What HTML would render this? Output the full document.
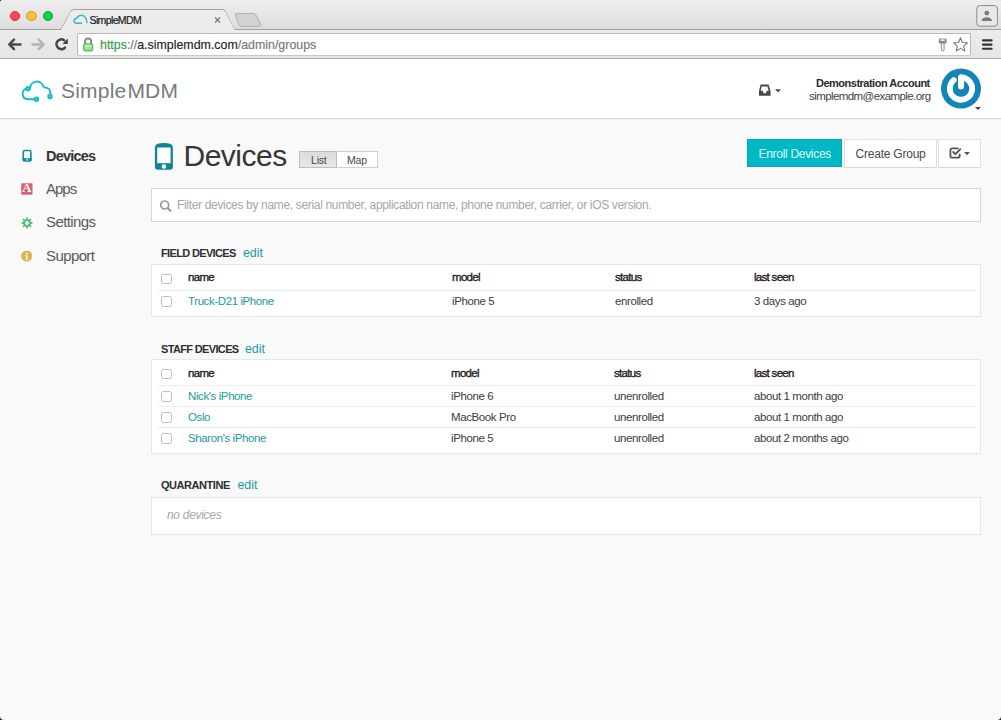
<!DOCTYPE html>
<html><head><meta charset="utf-8">
<style>
*{margin:0;padding:0;box-sizing:border-box}
html,body{width:1001px;height:720px;overflow:hidden;background:#1e1e1e}
body{font-family:"Liberation Sans",sans-serif;position:relative}
.a{position:absolute;white-space:nowrap}
#win{position:absolute;left:0;top:0;width:1001px;height:720px;background:#f9f9f9;border-radius:3px 1px 4px 4px;overflow:hidden}
#tabstrip{position:absolute;left:0;top:0;width:1001px;height:30px;background:linear-gradient(#eeeeee,#dddddd)}
#toolbar{position:absolute;left:0;top:30px;width:1001px;height:29px;background:linear-gradient(#ececec,#e6e6e6);border-bottom:1px solid #a8a8a8}
#omni{position:absolute;left:77px;top:33px;width:894px;height:23px;background:#fff;border:1px solid #b8b8b8;border-bottom-color:#c8c8c8;border-radius:2px}
#header{position:absolute;left:0;top:59px;width:1001px;height:60px;background:#fff;border-bottom:1px solid #d9d9d9;box-shadow:0 1px 0 #f0f0f0}
.teal,.td.teal{color:#1f9a9e}
.th{position:absolute;white-space:nowrap;font-weight:normal;font-size:11.5px;color:#222;letter-spacing:-0.7px;line-height:12px;-webkit-text-stroke:0.35px #222}
.td{position:absolute;white-space:nowrap;font-size:11.5px;color:#3c3c3c;letter-spacing:-0.4px;line-height:12px}
.cb{position:absolute;width:10.5px;height:10.5px;border:1px solid #bdbdbd;border-radius:2.5px;background:#fff}
.tbl{position:absolute;left:151px;width:830px;background:#fff;border:1px solid #e7e7e7}
.hr{position:absolute;left:6px;width:818px;height:1px;background:#ececec}
.sec{position:absolute;white-space:nowrap;font-weight:bold;font-size:11px;color:#2e2e2e;letter-spacing:-0.65px;line-height:12px}
.edit{font-size:12.5px;line-height:14px;letter-spacing:-0.1px}
.nav{position:absolute;white-space:nowrap;font-size:15px;color:#5a5a5a;line-height:16px}
</style></head><body>
<div id="win">
  <!-- tab strip -->
  <div id="tabstrip">
    <div class="a" style="left:9.8px;top:10.5px;width:10.4px;height:10.4px;border-radius:50%;background:#fd4659;border:0.7px solid #c52a3c"></div>
    <div class="a" style="left:26.3px;top:10.5px;width:10.4px;height:10.4px;border-radius:50%;background:#fdbd3e;border:0.7px solid #d39a2a"></div>
    <div class="a" style="left:43.1px;top:10.5px;width:10.4px;height:10.4px;border-radius:50%;background:#0bd54e;border:0.7px solid #0a9a3a"></div>
    <svg class="a" style="left:0;top:0" width="1001" height="31">
      <path d="M0 29.5 H61 L71 11.5 Q72 9.5 74 9.5 H222 Q224 9.5 225 11.5 L234 29.5 H1001" fill="none" stroke="#a2a2a2" stroke-width="1.1"/>
      <path d="M61 30 L71 11.5 Q72 10 74 10 H222 Q224 10 225 11.5 L234.5 30 Z" fill="#ececec"/>
      <path d="M235 14 Q236 13.5 238 13.5 H253 Q255 13.5 256 15 L261 24.5 Q261.5 26.5 259 26.5 H242 Q240 26.5 239 25 Z" fill="#d3d3d3" stroke="#b3b3b3" stroke-width="1"/>
      <path d="M215 17.5 L220 22.5 M220 17.5 L215 22.5" stroke="#777" stroke-width="1.2"/>
      <rect x="949.5" y="1.5" width="0" height="0"/>
      <rect x="976.8" y="5.6" width="20.6" height="20.6" rx="3" fill="#e8e8e8" stroke="#8c8c8c" stroke-width="1"/>
      <circle cx="986.8" cy="13.1" r="2.4" fill="#7a7a7a"/>
      <path d="M981.6 21 Q982 17.3 986.8 17.3 Q991.6 17.3 992 21 Z" fill="#7a7a7a"/>
    </svg>
    <svg class="a" style="left:73px;top:14px" width="15" height="11" viewBox="0 0 15 11">
      <path d="M8.5 9.2 H3.5 Q1 9.2 1 6.8 Q1 4.6 3.6 4.5 Q5 1.2 8.4 1.2 Q11.2 1.2 12.4 3.6 Q14 5 13.8 8.6" fill="none" stroke="#3ab6c8" stroke-width="1.5" stroke-linecap="round"/>
    </svg>
    <div class="a" style="left:89.5px;top:14.5px;font-size:10.5px;line-height:11px;color:#1a1a1a;letter-spacing:-0.62px;-webkit-text-stroke:0.2px #1a1a1a">SimpleMDM</div>
  </div>
  <!-- toolbar -->
  <div id="toolbar"></div>
  <svg class="a" style="left:0;top:30px" width="80" height="28">
    <path d="M9.3 14.4 H20.5 M14 9.6 L9.3 14.4 L14 19.2" fill="none" stroke="#4a4a4a" stroke-width="2.5" stroke-linecap="round" stroke-linejoin="round"/>
    <path d="M32.5 14.4 H43.5 M38.8 9.6 L43.5 14.4 L38.8 19.2" fill="none" stroke="#b4b4b4" stroke-width="2.5" stroke-linecap="round" stroke-linejoin="round"/>
    <path d="M64.2 10.2 A4.9 4.9 0 1 0 65.05 17.55" fill="none" stroke="#454545" stroke-width="2.5" stroke-linecap="round"/>
    <path d="M67.8 8.6 L67.8 13.9 L62.5 13.9 Z" fill="#454545"/>
  </svg>
  <div id="omni"></div>
  <svg class="a" style="left:83px;top:37px" width="11" height="15" viewBox="0 0 11 15">
    <path d="M2.1 7 V4.6 Q2.1 1.6 5.1 1.6 Q8.1 1.6 8.1 4.6 V7" fill="none" stroke="#8a8a8a" stroke-width="2"/>
    <rect x="0.7" y="6.9" width="9" height="7" rx="0.8" fill="#92e68a" stroke="#56a653" stroke-width="1"/>
    <rect x="1.7" y="7.9" width="7" height="2.2" fill="#b5f2ae"/>
  </svg>
  <div class="a" style="left:100px;top:38px;font-size:12.4px;line-height:14px;color:#222;-webkit-text-stroke:0.15px"><span style="color:#2b9f3a">https</span><span style="color:#777">://</span>a.simplemdm.com<span style="color:#777">/admin/groups</span></div>
  <svg class="a" style="left:930px;top:34px" width="70" height="22">
    <rect x="8.8" y="4.6" width="7.8" height="4.8" rx="1.2" fill="#8a8a8a"/>
    <rect x="10.6" y="5.4" width="4.2" height="1.4" fill="#fff"/>
    <rect x="11.3" y="9" width="2.8" height="7.8" rx="1" fill="#f4f4f4" stroke="#8a8a8a" stroke-width="1"/>
    <path d="M30.50 3.80 L32.44 8.43 L37.44 8.84 L33.64 12.12 L34.79 17.01 L30.50 14.40 L26.21 17.01 L27.36 12.12 L23.56 8.84 L28.56 8.43 Z" fill="#fff" stroke="#7a7a7a" stroke-width="1.1" stroke-linejoin="round"/>
    <path d="M53 6.4 H61.6 M53 10.6 H61.6 M53 14.8 H61.6" stroke="#333" stroke-width="2.1" stroke-linecap="round"/>
  </svg>

  <!-- header -->
  <div id="header"></div>
  <svg class="a" style="left:19px;top:79px" width="36" height="25" viewBox="0 0 36 25">
    <g fill="none" stroke="#19b7c9" stroke-width="1.9" stroke-linecap="round">
      <path d="M17.4 20.3 H8.2 A5.6 5.6 0 0 1 7.2 9.6"/>
      <path d="M11.2 8.6 A6.7 6.7 0 0 1 24.3 7.4 Q25 8.6 26.6 8.6 A5.2 5.2 0 0 1 31.4 13.8 V16.8"/>
      <path d="M9 9.7 Q10.6 9.6 11.2 8.6"/>
    </g>
    <g fill="#2ad4e4" stroke="#19b7c9" stroke-width="1.5">
      <circle cx="9" cy="9.7" r="2"/>
      <circle cx="17.4" cy="20.3" r="2"/>
      <circle cx="31" cy="17.4" r="2"/>
    </g>
  </svg>
  <div class="a" style="left:61px;top:80px;font-size:21px;line-height:22px;color:#7a7a7a;letter-spacing:0.2px">Simple<span style="margin-left:1px">MDM</span></div>

  <svg class="a" style="left:757px;top:83px" width="28" height="14">
    <path d="M3.6 1.5 H11.6 L13.5 8 V12.8 H2 V8 Z" fill="#474747"/>
    <path d="M4.7 3.4 H10.5 L11.7 7.8 H9.8 L8.9 10.2 H6.6 L5.7 7.8 H3.7 Z" fill="#fff"/>
    <path d="M18.1 6.2 H23.9 L21 9.6 Z" fill="#4a4a4a"/>
  </svg>
  <div class="a" style="left:816px;top:77px;font-size:11px;line-height:12px;font-weight:bold;color:#2a2a2a;letter-spacing:-0.5px">Demonstration Account</div>
  <div class="a" style="left:809px;top:90px;font-size:11.5px;line-height:12px;color:#444;letter-spacing:-0.58px">simplemdm@example.org</div>
  <svg class="a" style="left:940px;top:67px" width="44" height="46">
    <circle cx="21" cy="21.6" r="20" fill="#1184ba"/>
    <path d="M21 10.45 A11.15 11.15 0 1 1 13.76 13.12" fill="none" stroke="#fff" stroke-width="5.9" stroke-linecap="round"/>
    <path d="M21 10.5 V19.5" stroke="#fff" stroke-width="6" stroke-linecap="round"/>
    <path d="M35 40 H41 L38 43 Z" fill="#444"/>
  </svg>

  <!-- sidebar -->
  <svg class="a" style="left:21px;top:148px" width="13" height="15">
    <rect x="2.3" y="2.5" width="7.6" height="10.2" rx="1.6" fill="none" stroke="#13899a" stroke-width="1.6"/>
    <rect x="1.5" y="10.3" width="9.2" height="3.2" rx="1" fill="#13899a"/>
    <circle cx="6.1" cy="11.9" r="0.8" fill="#fff"/>
  </svg>
  <div class="nav" style="left:46px;top:148px;font-weight:bold;color:#333;font-size:14.5px;letter-spacing:-0.8px">Devices</div>
  <svg class="a" style="left:20px;top:182px" width="14" height="14">
    <rect x="1.2" y="1.3" width="11.3" height="11.4" fill="#d8607a"/>
  </svg>
  <div class="a" style="left:21.2px;top:182px;width:11.3px;text-align:center;font-family:'Liberation Serif',serif;font-weight:bold;font-size:12.5px;line-height:13px;color:#fff">A</div>
  <div class="nav" style="left:46px;top:181px;letter-spacing:-1px">Apps</div>
  <svg class="a" style="left:19.6px;top:215.6px" width="14" height="14">
    <path d="M6.07 3.21 L6.26 1.45 L7.74 1.45 L7.93 3.21 L9.02 3.66 L10.40 2.55 L11.45 3.60 L10.34 4.98 L10.79 6.07 L12.55 6.26 L12.55 7.74 L10.79 7.93 L10.34 9.02 L11.45 10.40 L10.40 11.45 L9.02 10.34 L7.93 10.79 L7.74 12.55 L6.26 12.55 L6.07 10.79 L4.98 10.34 L3.60 11.45 L2.55 10.40 L3.66 9.02 L3.21 7.93 L1.45 7.74 L1.45 6.26 L3.21 6.07 L3.66 4.98 L2.55 3.60 L3.60 2.55 L4.98 3.66 Z" fill="#52b87a"/>
    <circle cx="7" cy="7" r="1.9" fill="#f9f9f9"/>
  </svg>
  <div class="nav" style="left:46px;top:214px;letter-spacing:-0.6px">Settings</div>
  <svg class="a" style="left:20px;top:249px" width="14" height="14">
    <circle cx="6.7" cy="7" r="5.6" fill="#d9b757"/>
    <path d="M5.3 6.2 H7.5 V9.9 H8.2 V10.6 H5.3 V9.9 H6 V6.9 H5.3 Z" fill="#fff"/>
    <circle cx="6.8" cy="4.4" r="0.95" fill="#fff"/>
  </svg>
  <div class="nav" style="left:46px;top:247.5px;letter-spacing:-0.6px">Support</div>

  <!-- title -->
  <svg class="a" style="left:152px;top:142px" width="23" height="30">
    <path d="M2.9 5.5 Q2.9 1.1 11.9 1.1 Q20.9 1.1 20.9 5.5 V25 Q20.9 27.8 18.1 27.8 H5.7 Q2.9 27.8 2.9 25 Z" fill="#118492"/>
    <rect x="5.2" y="5.5" width="13.4" height="15.7" fill="#fff"/>
    <circle cx="11.9" cy="24.5" r="2.2" fill="#fff"/>
  </svg>
  <div class="a" style="left:183.5px;top:140px;font-size:30px;line-height:32px;color:#363636;letter-spacing:-0.5px">Devices</div>
  <div class="a" style="left:299px;top:151px;width:79px;height:17px;border:1px solid #cfcfcf;background:#fff"></div>
  <div class="a" style="left:299px;top:151px;width:38px;height:17px;border:1px solid #bdbdbd;background:linear-gradient(#dcdcdc,#e8e8e8)"></div>
  <div class="a" style="left:311px;top:154px;font-size:10.5px;line-height:12px;color:#484848;letter-spacing:-0.2px">List</div>
  <div class="a" style="left:347px;top:154px;font-size:10.5px;line-height:12px;color:#484848;letter-spacing:-0.2px">Map</div>

  <div class="a" style="left:747px;top:139px;width:95px;height:28px;background:#00b7c6;border:1px solid #05a7b4"></div>
  <div class="a" style="left:758.5px;top:147.5px;font-size:12px;line-height:13px;color:#dcffff;letter-spacing:-0.3px">Enroll Devices</div>
  <div class="a" style="left:844px;top:139px;width:93px;height:28.5px;background:#fff;border:1px solid #e0e0e0;border-bottom-color:#d6d6d6;border-radius:1px"></div>
  <div class="a" style="left:855.5px;top:147.5px;font-size:12px;line-height:13px;color:#484848;letter-spacing:-0.22px">Create Group</div>
  <div class="a" style="left:938px;top:139px;width:43px;height:28.5px;background:#fff;border:1px solid #e2e2e2;border-bottom-color:#d8d8d8;border-radius:1px"></div>
  <svg class="a" style="left:948px;top:144px" width="26" height="16">
    <path d="M9.8 4.4 H4.3 Q2.4 4.4 2.4 6.3 V11.8 Q2.4 13.7 4.3 13.7 H9.8 Q11.7 13.7 11.7 11.8 V10.4" fill="none" stroke="#555" stroke-width="1.8" stroke-linecap="round"/>
    <path d="M5.2 8 L7.4 10.2 L12.4 5.2" fill="none" stroke="#555" stroke-width="1.9" stroke-linecap="round" stroke-linejoin="round"/>
    <path d="M16 8 H22 L19 11.2 Z" fill="#555"/>
  </svg>

  <!-- search -->
  <div class="a" style="left:151px;top:188px;width:830px;height:34px;background:#fff;border:1px solid #d6d6d6"></div>
  <svg class="a" style="left:159px;top:199px" width="14" height="14">
    <circle cx="5.7" cy="6" r="4" fill="none" stroke="#9a9a9a" stroke-width="1.7"/>
    <path d="M8.6 9 L11.5 11.8" stroke="#9a9a9a" stroke-width="2" stroke-linecap="round"/>
  </svg>
  <div class="a" style="left:177px;top:199px;font-size:12px;line-height:13px;color:#a6a6a6;letter-spacing:-0.33px">Filter devices by name, serial number, application name, phone number, carrier, or iOS version.</div>

  <!-- FIELD DEVICES -->
  <div class="sec" style="left:161px;top:247px">FIELD DEVICES</div><div class="a teal edit" style="left:243px;top:246px">edit</div>
  <div class="tbl" style="top:264px;height:53px">
    <div class="cb" style="left:9px;top:8.6px"></div>
    <div class="th" style="left:36px;top:6px">name</div>
    <div class="th" style="left:300px;top:6px">model</div>
    <div class="th" style="left:463px;top:6px">status</div>
    <div class="th" style="left:602px;top:6px">last seen</div>
    <div class="hr" style="top:25px"></div>
    <div class="cb" style="left:9px;top:31px"></div>
    <div class="td teal" style="left:36px;top:30px">Truck-D21 iPhone</div>
    <div class="td" style="left:300px;top:30px">iPhone 5</div>
    <div class="td" style="left:463px;top:30px">enrolled</div>
    <div class="td" style="left:602px;top:30px">3 days ago</div>
  </div>

  <!-- STAFF DEVICES -->
  <div class="sec" style="left:161px;top:343px">STAFF DEVICES</div><div class="a teal edit" style="left:245px;top:342px">edit</div>
  <div class="tbl" style="top:359px;height:95px">
    <div class="cb" style="left:9px;top:8.6px"></div>
    <div class="th" style="left:36px;top:7px">name</div>
    <div class="th" style="left:299px;top:7px">model</div>
    <div class="th" style="left:462px;top:7px">status</div>
    <div class="th" style="left:602px;top:7px">last seen</div>
    <div class="hr" style="top:25px"></div>
    <div class="cb" style="left:9px;top:31px"></div>
    <div class="td teal" style="left:36px;top:30px">Nick's iPhone</div>
    <div class="td" style="left:299px;top:30px">iPhone 6</div>
    <div class="td" style="left:462px;top:30px">unenrolled</div>
    <div class="td" style="left:602px;top:30px">about 1 month ago</div>
    <div class="hr" style="top:46px"></div>
    <div class="cb" style="left:9px;top:52px"></div>
    <div class="td teal" style="left:36px;top:51px">Oslo</div>
    <div class="td" style="left:299px;top:51px">MacBook Pro</div>
    <div class="td" style="left:462px;top:51px">unenrolled</div>
    <div class="td" style="left:602px;top:51px">about 1 month ago</div>
    <div class="hr" style="top:67px"></div>
    <div class="cb" style="left:9px;top:73px"></div>
    <div class="td teal" style="left:36px;top:72px">Sharon's iPhone</div>
    <div class="td" style="left:299px;top:72px">iPhone 5</div>
    <div class="td" style="left:462px;top:72px">unenrolled</div>
    <div class="td" style="left:602px;top:72px">about 2 months ago</div>
  </div>

  <!-- QUARANTINE -->
  <div class="sec" style="left:161px;top:479px;letter-spacing:-0.45px">QUARANTINE</div><div class="a teal edit" style="left:237.5px;top:478px">edit</div>
  <div class="tbl" style="top:497px;height:38px">
    <div class="td" style="left:15px;top:11px;font-style:italic;color:#a8a8a8;font-size:12px;letter-spacing:-0.3px">no devices</div>
  </div>
</div>
</body></html>
